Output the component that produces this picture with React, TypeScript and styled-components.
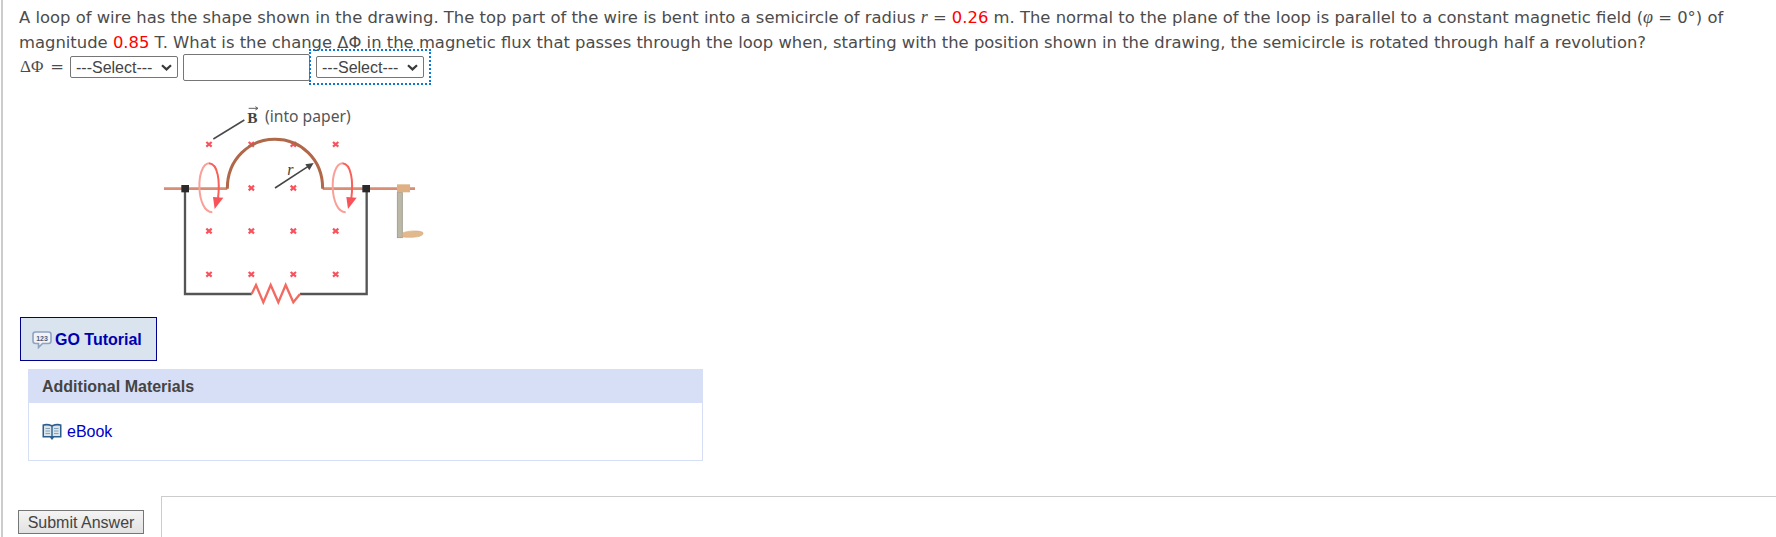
import styled, { createGlobalStyle } from 'styled-components';

const Global = createGlobalStyle`
  html, body {
    margin: 0;
    padding: 0;
    background: #fff;
    overflow: hidden;
  }
`;

const Page = styled.div`
  margin-left: 1px;
  height: 537px;
  box-sizing: border-box;
  border-left: 2px solid #ccc;
  padding: 5px 0 0 16px;
  overflow: hidden;
  font-family: 'Liberation Sans', Arial, sans-serif;
  color: #444;
`;

const Question = styled.p`
  margin: 0;
  font-family: 'DejaVu Sans', Verdana, sans-serif;
  font-size: 16.4px;
  line-height: 25px;
  white-space: nowrap;
  color: #4c4c4c;
`;

const Given = styled.span`
  color: #f00;
`;

const Variable = styled.i`
  font-family: 'Liberation Serif', serif;
  font-size: 18px;
`;

const AnswerRow = styled.div`
  display: flex;
  align-items: center;
  height: 36px;
  margin-top: -6px;
`;

const Symbol = styled.span`
  display: flex;
  gap: 7px;
  align-items: baseline;
  font-family: 'DejaVu Sans', sans-serif;
  font-size: 16.4px;
  color: #4c4c4c;
  width: 50px;
  padding-left: 1px;
  white-space: nowrap;
`;

const Greek = styled.span`
  font-family: 'Liberation Serif', serif;
  font-size: 17px;
`;

const chevron = encodeURIComponent(
  '<svg xmlns="http://www.w3.org/2000/svg" width="11" height="7" viewBox="0 0 11 7"><path d="M1 1.2L5.5 5.4L10 1.2" fill="none" stroke="#3a3a3a" stroke-width="2.2"/></svg>'
);

const Select = styled.select`
  appearance: none;
  width: 108px;
  height: 22px;
  box-sizing: border-box;
  font-family: 'Liberation Sans', Arial, sans-serif;
  font-size: 16px;
  color: #444;
  background: #fff url("data:image/svg+xml,${chevron}") no-repeat right 5px center;
  border: 1px solid #767676;
  border-radius: 2px;
  padding: 0 0 0 5px;
`;

const ValueInput = styled.input`
  width: 127px;
  height: 27px;
  box-sizing: border-box;
  margin-left: 5px;
  border: 1px solid #767676;
  border-radius: 2px;
  background: #fff;
`;

const FocusRing = styled.span`
  display: flex;
  align-items: center;
  justify-content: center;
  width: 122px;
  height: 36px;
  box-sizing: border-box;
  margin-left: -1px;
  border: 2px dotted #0a7ad6;
`;

const Figure = styled.svg`
  display: block;
  width: 300px;
  height: 210px;
  margin: 10px 0 0 131px;
`;

const TutorialButton = styled.a`
  display: flex;
  align-items: center;
  gap: 3px;
  width: 137px;
  height: 44px;
  box-sizing: border-box;
  margin: 12px 0 0 1px;
  padding: 1px 0 0 11px;
  background: #d9e4ef;
  border: 1px solid #00008b;
  font-size: 16px;
  font-weight: bold;
  color: #0000b0;
`;

const Materials = styled.section`
  width: 675px;
  margin: 8px 0 0 9px;
  height: 92px;
  box-sizing: border-box;
  border: 1px solid #d7dff7;
  border-top: 0;
`;

const MaterialsTitle = styled.h3`
  margin: 0 -1px;
  height: 34px;
  padding-left: 14px;
  background: #d7dff7;
  font-size: 16px;
  font-weight: bold;
  line-height: 36px;
  color: #444;
`;

const BookLink = styled.a`
  display: flex;
  align-items: center;
  gap: 5px;
  height: 57px;
  padding-left: 13px;
  font-size: 16px;
  color: #0000c8;
`;

const SubmitRow = styled.div`
  display: flex;
  align-items: flex-start;
  margin: 35px 0 0 -1px;
`;

const SubmitButton = styled.button`
  width: 126px;
  height: 24px;
  box-sizing: border-box;
  margin-top: 14px;
  padding: 1px 0 0;
  background: linear-gradient(#f4f4f4, #e2e2e2);
  border: 1px solid #767676;
  font-family: 'Liberation Sans', Arial, sans-serif;
  font-size: 16px;
  line-height: 20px;
  color: #444;
`;

const ResponseBox = styled.div`
  flex: 1;
  height: 60px;
  margin-left: 17px;
  border-top: 1px solid #ccc;
  border-left: 1px solid #ccc;
`;

const Mark = ({ x, y }: { x: number; y: number }) => (
  <path
    d={`M${x - 8} ${y - 7}L${x + 8} ${y + 7}M${x + 8} ${y - 7}L${x - 8} ${y + 7}`}
    stroke="#f8525c"
    strokeWidth="6.5"
    fill="none"
  />
);

const markColumns = [177, 304, 430, 557];
const markRows = [148, 279, 408, 538];

const Ring = ({ x }: { x: number }) => (
  <g fill="none">
    <path
      d={`M${x + 10} 352C${x - 40} 350 ${x - 40} 207 ${x} 205`}
      stroke="#f9a098"
      strokeWidth="6"
    />
    <path d={`M${x} 205C${x + 28} 207 ${x + 33} 260 ${x + 27} 310`} stroke="#f86058" strokeWidth="6" />
    <path d={`M${x + 12} 306L${x + 43} 308L${x + 17} 342Z`} fill="#f9525a" />
  </g>
);

const Diagram = () => (
  <Figure viewBox="0 0 900 630">
    <defs>
      <filter id="soft" x="-5%" y="-5%" width="110%" height="110%">
        <feGaussianBlur stdDeviation="1.4" />
      </filter>
    </defs>
    <g filter="url(#soft)">
      {markRows.map((y) =>
        markColumns.map((x) =>
          y === 279 && (x === 177 || x === 557) ? null : <Mark key={`${x}-${y}`} x={x} y={y} />
        )
      )}
      <path d="M190 132L283 75" stroke="#4a4a4a" strokeWidth="4.5" />
      <path d="M42 281H232M518 281H795" stroke="#d98d75" strokeWidth="8" fill="none" />
      <path d="M232 281C232 190 300 133 375 133C450 133 518 190 518 281" stroke="#b0684a" strokeWidth="9" fill="none" />
      <Ring x={177} />
      <Ring x={577} />
      <path d="M105 281V597H305M450 597H650V281" stroke="#555" strokeWidth="7" fill="none" />
      <path d="M305 597L318 570L340 622L362 570L385 622L407 570L430 622L450 597" stroke="#f26a60" strokeWidth="7" fill="none" />
      <rect x="94" y="270" width="23" height="22" fill="#2b2b2b" />
      <rect x="637" y="270" width="23" height="22" fill="#2b2b2b" />
      <path d="M375 279L478 212" stroke="#444" strokeWidth="4.5" />
      <path d="M491 204L466 208L478 226Z" fill="#444" />
      <rect x="742" y="292" width="15" height="136" fill="#bcb8a8" stroke="#9c9a8c" strokeWidth="2.5" />
      <rect x="741" y="268" width="39" height="24" fill="#dfb083" />
      <path d="M757 414C775 406 810 406 818 412C824 422 804 430 757 426Z" fill="#e2b98d" stroke="#cf9f70" strokeWidth="1.5" />
    </g>
    <path d="M296 40H322M316 35L324 40L316 45" stroke="#444" strokeWidth="2.5" fill="none" />
    <text x="292" y="84" fontFamily="'Liberation Serif', serif" fontWeight="bold" fontSize="46" fill="#444">
      B
    </text>
    <text x="345" y="82" fontFamily="'Noto Sans', sans-serif" fontSize="47" fill="#555">
      (into paper)
    </text>
    <text x="412" y="240" fontFamily="'Liberation Serif', serif" fontStyle="italic" fontSize="48" fill="#444">
      r
    </text>
  </Figure>
);

const TutorialIcon = () => (
  <svg width="20" height="18" viewBox="0 0 20 18">
    <path
      d="M3.5 1H16.5Q19 1 19 3.5V10Q19 12.5 16.5 12.5H10.5L6.5 16.5V12.5H3.5Q1 12.5 1 10V3.5Q1 1 3.5 1Z"
      fill="#f0f3f8"
      stroke="#8fa3c0"
      strokeWidth="1.6"
    />
    <text x="10" y="9.5" textAnchor="middle" fontFamily="'Liberation Sans', sans-serif" fontWeight="bold" fontSize="7" fill="#4e5d78">
      123
    </text>
  </svg>
);

const BookIcon = () => (
  <svg width="20" height="18" viewBox="0 0 20 18">
    <path d="M0.5 1.5Q5 0 10 2Q15 0 19.5 1.5V14.5H12L10 17L8 14.5H0.5Z" fill="#2c5f8f" />
    <path d="M2 2.8Q6 1.8 9.3 3.4V13H2ZM10.7 3.4Q14 1.8 18 2.8V13H10.7Z" fill="#d8e3ea" />
    <path d="M3.5 5.5H8M3.5 8H8M3.5 10.5H8M12 5.5H16.5M12 8H16.5M12 10.5H16.5" stroke="#8aa2b8" strokeWidth="1" />
  </svg>
);

const App = () => (
  <>
    <Global />
    <Page>
      <Question>
        A loop of wire has the shape shown in the drawing. The top part of the wire is bent into a semicircle of
        radius <Variable>r</Variable> = <Given>0.26</Given> m. The normal to the plane of the loop is parallel to a
        constant magnetic field (<Variable>φ</Variable> = 0°) of
        <br />
        magnitude <Given>0.85</Given> T. What is the change ΔΦ in the magnetic flux that passes through the loop when,
        starting with the position shown in the drawing, the semicircle is rotated through half a revolution?
      </Question>
      <AnswerRow>
        <Symbol>
          <Greek>ΔΦ</Greek>=
        </Symbol>
        <Select defaultValue="">
          <option value="">---Select---</option>
        </Select>
        <ValueInput type="text" />
        <FocusRing>
          <Select defaultValue="">
            <option value="">---Select---</option>
          </Select>
        </FocusRing>
      </AnswerRow>
      <Diagram />
      <TutorialButton>
        <TutorialIcon />
        GO Tutorial
      </TutorialButton>
      <Materials>
        <MaterialsTitle>Additional Materials</MaterialsTitle>
        <BookLink>
          <BookIcon />
          eBook
        </BookLink>
      </Materials>
      <SubmitRow>
        <SubmitButton type="button">Submit Answer</SubmitButton>
        <ResponseBox />
      </SubmitRow>
    </Page>
  </>
);

export default App;
